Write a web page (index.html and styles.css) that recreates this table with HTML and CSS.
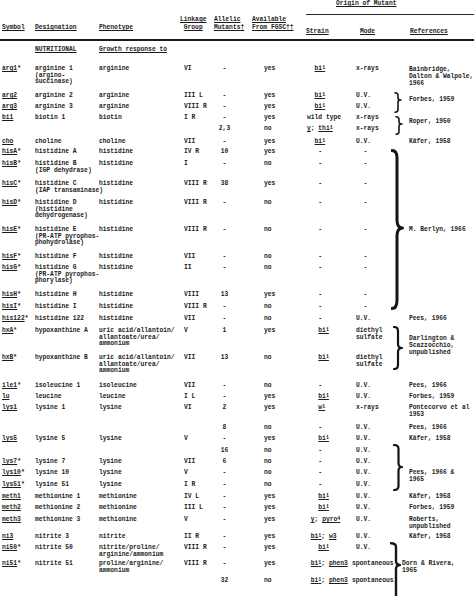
FILE: index.html
```html
<!DOCTYPE html>
<html>
<head>
<meta charset="utf-8">
<link rel="stylesheet" href="styles.css">
</head>
<body>
<div class="page">
  <div class="g origin-row">
    <div class="origin"><u>Origin of Mutant</u></div>
  </div>
  <div class="g head">
    <div class="one"><u>Symbol</u></div>
    <div class="one"><u>Designation</u></div>
    <div class="one"><u>Phenotype</u></div>
    <div><u>Linkage</u><br> <u>Group</u></div>
    <div class="hal"><u>Allelic</u><br><u>Mutants†</u></div>
    <div class="hav"><u>Available</u><br><u>From FGSC††</u></div>
    <div class="low"><u>Strain</u></div>
    <div class="low hmo"><u>Mode</u></div>
    <div class="low hrf"><u>References</u></div>
  </div>
  <div class="rule"></div>
  <div class="g nut">
    <div></div>
    <div><u>NUTRITIONAL</u></div>
    <div><u>Growth response to</u></div>
  </div>

  <div class="g r h27"><div><u>arg1</u>*</div><div>arginine 1<br>(argino-<br>succinase)</div><div>arginine</div><div class="lg">VI</div><div class="al">-</div><div class="av">yes</div><div class="st">  <u>bi<span class="sp">1</span></u></div><div class="mo">x-rays</div><div class="rf rf7">Bainbridge,<br>Dalton &amp; Walpole,<br>1966</div></div>
  <div class="g r h11"><div><u>arg2</u></div><div>arginine 2</div><div>arginine</div><div class="lg">III L</div><div class="al">-</div><div class="av">yes</div><div class="st">  <u>bi<span class="sp">1</span></u></div><div class="mo">U.V.</div><div class="rf pt4">Forbes, 1959</div></div>
  <div class="g r h11"><div><u>arg3</u></div><div>arginine 3</div><div>arginine</div><div class="lg">VIII R</div><div class="al">-</div><div class="av">yes</div><div class="st">  <u>bi<span class="sp">1</span></u></div><div class="mo">U.V.</div><div class="rf"></div></div>
  <div class="g r h11"><div><u>bi1</u></div><div>biotin 1</div><div>biotin</div><div class="lg">I R</div><div class="al">-</div><div class="av">yes</div><div class="st">wild type</div><div class="mo">x-rays</div><div class="rf pt4">Roper, 1950</div></div>
  <div class="g r h13"><div></div><div></div><div></div><div class="lg"></div><div class="al">2,3</div><div class="av">no</div><div class="st"><u>y</u>; <u>thi<span class="sp">1</span></u></div><div class="mo">x-rays</div><div class="rf"></div></div>
  <div class="g r h10"><div><u>cho</u></div><div>choline</div><div>choline</div><div class="lg">VII</div><div class="al">-</div><div class="av">yes</div><div class="st">  <u>bi<span class="sp">1</span></u></div><div class="mo">U.V.</div><div class="rf">Käfer, 1958</div></div>
  <div class="g r h12"><div><u>hisA</u>*</div><div>histidine A</div><div>histidine</div><div class="lg">IV R</div><div class="al">10</div><div class="av">yes</div><div class="st">   -</div><div class="mo">  -</div><div class="rf"></div></div>
  <div class="g r h20"><div><u>hisB</u>*</div><div>histidine B<br>(IGP dehydrase)</div><div>histidine</div><div class="lg">I</div><div class="al">-</div><div class="av">no</div><div class="st">   -</div><div class="mo">  -</div><div class="rf"></div></div>
  <div class="g r h19"><div><u>hisC</u>*</div><div>histidine C<br>(IAP transaminase)</div><div>histidine</div><div class="lg">VIII R</div><div class="al">38</div><div class="av">yes</div><div class="st">   -</div><div class="mo">  -</div><div class="rf"></div></div>
  <div class="g r h27"><div><u>hisD</u>*</div><div>histidine D<br>(histidine<br>dehydrogenase)</div><div>histidine</div><div class="lg">VIII R</div><div class="al">-</div><div class="av">no</div><div class="st">   -</div><div class="mo">  -</div><div class="rf"></div></div>
  <div class="g r h27"><div><u>hisE</u>*</div><div>histidine E<br>(PR-ATP pyrophos-<br>phohydrolase)</div><div>histidine</div><div class="lg">VIII R</div><div class="al">-</div><div class="av">no</div><div class="st">   -</div><div class="mo">  -</div><div class="rf">M. Berlyn, 1966</div></div>
  <div class="g r h11"><div><u>hisF</u>*</div><div>histidine F</div><div>histidine</div><div class="lg">VII</div><div class="al">-</div><div class="av">no</div><div class="st">   -</div><div class="mo">  -</div><div class="rf"></div></div>
  <div class="g r h27"><div><u>hisG</u>*</div><div>histidine G<br>(PR-ATP pyrophos-<br>phorylase)</div><div>histidine</div><div class="lg">II</div><div class="al">-</div><div class="av">no</div><div class="st">   -</div><div class="mo">  -</div><div class="rf"></div></div>
  <div class="g r h12"><div><u>hisH</u>*</div><div>histidine H</div><div>histidine</div><div class="lg">VIII</div><div class="al">13</div><div class="av">yes</div><div class="st">   -</div><div class="mo">  -</div><div class="rf"></div></div>
  <div class="g r h12"><div><u>hisI</u>*</div><div>histidine I</div><div>histidine</div><div class="lg">VIII R</div><div class="al">-</div><div class="av">no</div><div class="st">   -</div><div class="mo">  -</div><div class="rf"></div></div>
  <div class="g r h12"><div><u>his122</u>*</div><div>histidine 122</div><div>histidine</div><div class="lg">VII</div><div class="al">-</div><div class="av">no</div><div class="st">   -</div><div class="mo">U.V.</div><div class="rf">Pees, 1966</div></div>
  <div class="g r h27"><div><u>hxA</u>*</div><div>hypoxanthine A</div><div>uric acid/allantoin/<br>allantoate/urea/<br>ammonium</div><div class="lg">V</div><div class="al">1</div><div class="av">yes</div><div class="st">   <u>bi<span class="sp">1</span></u></div><div class="mo">diethyl<br>sulfate</div><div class="rf rf7 pt7">Darlington &amp;<br>Scazzocchio,<br>unpublished</div></div>
  <div class="g r h28"><div><u>hxB</u>*</div><div>hypoxanthine B</div><div>uric acid/allantoin/<br>allantoate/urea/<br>ammonium</div><div class="lg">VII</div><div class="al">13</div><div class="av">no</div><div class="st">   <u>bi<span class="sp">1</span></u></div><div class="mo">diethyl<br>sulfate</div><div class="rf"></div></div>
  <div class="g r h11"><div><u>ile1</u>*</div><div>isoleucine 1</div><div>isoleucine</div><div class="lg">VII</div><div class="al">-</div><div class="av">no</div><div class="st">   -</div><div class="mo">U.V.</div><div class="rf">Pees, 1966</div></div>
  <div class="g r h11"><div><u>lu</u></div><div>leucine</div><div>leucine</div><div class="lg">I L</div><div class="al">-</div><div class="av">yes</div><div class="st">   <u>bi<span class="sp">1</span></u></div><div class="mo">U.V.</div><div class="rf">Forbes, 1959</div></div>
  <div class="g r h20"><div><u>lys1</u></div><div>lysine 1</div><div>lysine</div><div class="lg">VI</div><div class="al">2</div><div class="av">yes</div><div class="st">   <u>w<span class="sp">1</span></u></div><div class="mo">x-rays</div><div class="rf">Pontecorvo et al<br>1953</div></div>
  <div class="g r h11"><div></div><div></div><div></div><div class="lg"></div><div class="al">8</div><div class="av">no</div><div class="st">   -</div><div class="mo">U.V.</div><div class="rf">Pees, 1966</div></div>
  <div class="g r h12"><div><u>lys5</u></div><div>lysine 5</div><div>lysine</div><div class="lg">V</div><div class="al">-</div><div class="av">yes</div><div class="st">   <u>bi<span class="sp">1</span></u></div><div class="mo">U.V.</div><div class="rf">Käfer, 1958</div></div>
  <div class="g r h11"><div></div><div></div><div></div><div class="lg"></div><div class="al">16</div><div class="av">no</div><div class="st">   -</div><div class="mo">U.V.</div><div class="rf"></div></div>
  <div class="g r h11"><div><u>lys7</u>*</div><div>lysine 7</div><div>lysine</div><div class="lg">VII</div><div class="al">6</div><div class="av">no</div><div class="st">   -</div><div class="mo">U.V.</div><div class="rf"></div></div>
  <div class="g r h12"><div><u>lys10</u>*</div><div>lysine 10</div><div>lysine</div><div class="lg">V</div><div class="al">-</div><div class="av">no</div><div class="st">   -</div><div class="mo">U.V.</div><div class="rf">Pees, 1966 &amp;<br>1965</div></div>
  <div class="g r h12"><div><u>lys51</u>*</div><div>lysine 51</div><div>lysine</div><div class="lg">I R</div><div class="al">-</div><div class="av">no</div><div class="st">   -</div><div class="mo">U.V.</div><div class="rf"></div></div>
  <div class="g r h11"><div><u>meth1</u></div><div>methionine 1</div><div>methionine</div><div class="lg">IV L</div><div class="al">-</div><div class="av">yes</div><div class="st">   <u>bi<span class="sp">1</span></u></div><div class="mo">U.V.</div><div class="rf">Käfer, 1958</div></div>
  <div class="g r h12"><div><u>meth2</u></div><div>methionine 2</div><div>methionine</div><div class="lg">III L</div><div class="al">-</div><div class="av">yes</div><div class="st">   <u>bi<span class="sp">1</span></u></div><div class="mo">U.V.</div><div class="rf">Forbes, 1959</div></div>
  <div class="g r h17"><div><u>meth3</u></div><div>methionine 3</div><div>methionine</div><div class="lg">V</div><div class="al">-</div><div class="av">yes</div><div class="st"> <u>y</u>; <u>pyro<span class="sp">4</span></u></div><div class="mo">U.V.</div><div class="rf">Roberts,<br>unpublished</div></div>
  <div class="g r h11"><div><u>ni3</u></div><div>nitrite 3</div><div>nitrite</div><div class="lg">II R</div><div class="al">-</div><div class="av">yes</div><div class="st"> <u>bi<span class="sp">1</span></u>; <u>w3</u></div><div class="mo">U.V.</div><div class="rf">Käfer, 1958</div></div>
  <div class="g r h16"><div><u>ni50</u>*</div><div>nitrite 50</div><div>nitrite/proline/<br>arginine/ammonium</div><div class="lg">VIII R</div><div class="al">-</div><div class="av">yes</div><div class="st">   <u>bi<span class="sp">1</span></u></div><div class="mo">U.V.</div><div class="rf"></div></div>
  <div class="g r h17"><div><u>ni51</u>*</div><div>nitrite 51</div><div>proline/arginine/<br>ammonium</div><div class="lg">VIII R</div><div class="al">-</div><div class="av">yes</div><div class="st"> <u>bi<span class="sp">1</span></u>; <u>phen3</u></div><div class="mo mo0">spontaneous</div><div class="rf rfl">Dorn &amp; Rivera,<br>1965</div></div>
  <div class="g r h12"><div></div><div></div><div></div><div class="lg"></div><div class="al">32</div><div class="av">no</div><div class="st"> <u>bi<span class="sp">1</span></u>; <u>phen3</u></div><div class="mo mo0">spontaneous</div><div class="rf"></div></div>

  <svg class="br b1" viewBox="0 0 8 21"><path d="M1 0.8 Q4 0.8 4 3.5 L4 6 Q4 8 7 8 Q4 8 4 10 L4 17.5 Q4 20.2 1 20.2"/></svg>
  <svg class="br b2" viewBox="0 0 8 19"><path d="M1 0.8 Q4 0.8 4 3.5 L4 6 Q4 8 7 8 Q4 8 4 10 L4 15.5 Q4 18.2 1 18.2"/></svg>
  <svg class="br b3" viewBox="0 0 13 161"><path d="M1 1.5 Q6 1.5 6 9 L6 71 Q6 79 11.5 79 Q6 79 6 87 L6 151 Q6 159.5 1 159.5"/></svg>
  <svg class="br b4" viewBox="0 0 10 44"><path d="M1 1 Q5 1 5 5 L5 18 Q5 22 9 22 Q5 22 5 26 L5 39 Q5 43 1 43"/></svg>
  <svg class="br b5" viewBox="0 0 10 47"><path d="M1 1 Q5.5 1 5.5 5 L5.5 19 Q5.5 23 9 23 Q5.5 23 5.5 27 L5.5 42 Q5.5 46 1 46"/></svg>
  <svg class="br b6" viewBox="0 0 11 60"><path d="M1 1.2 Q6 1.2 6 5 L6 19 Q6 23 10 23 Q6 23 6 27 L6 54 Q6 58.5 1 58.5"/></svg>
</div>
</body>
</html>
```

FILE: styles.css
```css
html, body {
  margin: 0;
  background: #ffffff;
}

.page {
  position: relative;
  width: 474px;
  height: 596px;
  overflow: hidden;
  box-sizing: border-box;
  padding-left: 2px;
  font-family: "Liberation Mono", "DejaVu Sans Mono", monospace;
  font-size: 6.3px;
  font-weight: 700;
  color: #1c1c1c;
}

u {
  text-decoration: underline;
  text-decoration-thickness: 1px;
  text-underline-offset: 1px;
}

.g {
  display: grid;
  grid-template-columns: 33px 64px 81px 31px 27px 68px 46px 57px 65px;
}

.g > div {
  white-space: pre;
  line-height: 6.5px;
}

/* header */
.g > .origin {
  grid-column: 7 / 10;
  padding-left: 30px;
  padding-top: 1px;
  padding-bottom: 7px;
  line-height: 6px;
  border-bottom: 1px solid #2a2a2a;
}

.head {
  margin-top: 1px;
}

.g.head > div {
  line-height: 8px;
}

.head .one {
  padding-top: 8px;
}

.head .low {
  padding-top: 12px;
}

.head .hal {
  padding-left: 3px;
}

.head .hav {
  padding-left: 14px;
}

.head .hmo {
  padding-left: 8px;
}

.head .hrf {
  padding-left: 1px;
}

.rule {
  height: 2px;
  margin: 3px 0 0 -2px;
  background: #1c1c1c;
}

.nut {
  margin-top: 6px;
  margin-bottom: 13px;
}

.g.nut > div {
  line-height: 6px;
}

/* data cells */
.lg {
  padding-left: 4px;
}

.al {
  text-align: center;
}

.av {
  padding-left: 26px;
}

.st {
  padding-left: 1px;
}

.mo {
  padding-left: 4px;
}

.mo0 {
  padding-left: 0;
}

.g > .rf7 {
  line-height: 7px;
}

.pt4 {
  padding-top: 4px;
}

.pt7 {
  padding-top: 7px;
}

.rfl {
  margin-left: -7px;
}

.sp {
  font-size: 5px;
  line-height: 0;
  vertical-align: 1.5px;
}

/* row heights */
.h10 { height: 10px; }
.h11 { height: 11px; }
.h12 { height: 12px; }
.h13 { height: 13px; }
.h16 { height: 16px; }
.h17 { height: 17px; }
.h19 { height: 19px; }
.h20 { height: 20px; }
.h27 { height: 27px; }
.h28 { height: 28px; }

/* curly brackets drawn over the table */
.br {
  position: absolute;
  fill: none;
  stroke: #151515;
  stroke-linecap: round;
  stroke-linejoin: round;
}

.br path {
  stroke-width: 1.6;
}

.b1 { left: 394px; top: 92px; width: 8px; height: 21px; }
.b2 { left: 395px; top: 116px; width: 8px; height: 19px; }
.b3 { left: 391px; top: 149px; width: 13px; height: 161px; }
.b3 path { stroke-width: 3; }
.b4 { left: 393px; top: 326px; width: 10px; height: 44px; }
.b4 path { stroke-width: 2.2; }
.b5 { left: 393px; top: 444px; width: 10px; height: 47px; }
.b5 path { stroke-width: 2.2; }
.b6 { left: 390px; top: 542px; width: 11px; height: 60px; }
.b6 path { stroke-width: 2.4; }
```
